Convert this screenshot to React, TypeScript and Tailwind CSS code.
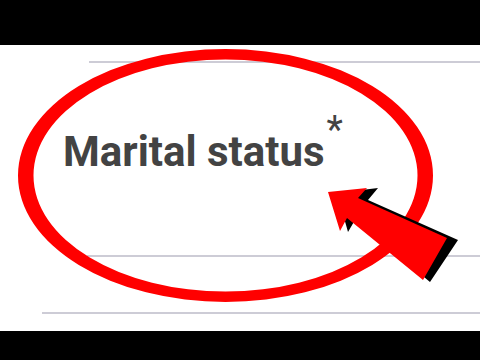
const arrow = "328,192 367,188 358,198 447,238 423,280 347,218 340,231";
const shadow = "337,193 378,188 368,200 458,240 430,282 355,220 348,232";

export default function App() {
  return (
    <div className="relative w-[480px] h-[360px] overflow-hidden bg-white font-['Roboto',sans-serif]">
      {/* top bar */}
      <div className="h-[45px] bg-black" />

      {/* form field */}
      <div className="h-[270px] bg-white">
        <div className="mt-[16px] ml-[89px] h-[2px] bg-[#cdccd6]" />
        <div className="mt-[68px] ml-[63px] flex items-start text-[42px] leading-none font-bold text-[#434343]">
          <span>Marital status</span>
          <span className="relative -top-[20px] ml-[2px] text-[38px] font-normal">*</span>
        </div>
        <div className="mt-[82px] ml-[87px] h-[2px] bg-[#cdccd6]" />
        <div className="mt-[55px] ml-[42px] h-[2px] bg-[#cdccd6]" />
      </div>

      {/* bottom bar */}
      <div className="h-[45px] bg-black" />

      {/* annotation */}
      <svg
        className="absolute inset-0 pointer-events-none"
        width="480"
        height="360"
        viewBox="0 0 480 360"
      >
        <path
          fill="#ff0000"
          fillRule="evenodd"
          d="M18 175.5a207.5 126.5 0 1 0 415 0a207.5 126.5 0 1 0 -415 0Z M33.5 175.5a192 116 0 1 0 384 0a192 116 0 1 0 -384 0Z"
        />
        <polygon points={shadow} fill="#000" />
        <polygon points={arrow} fill="#ff0000" />
      </svg>
    </div>
  );
}
